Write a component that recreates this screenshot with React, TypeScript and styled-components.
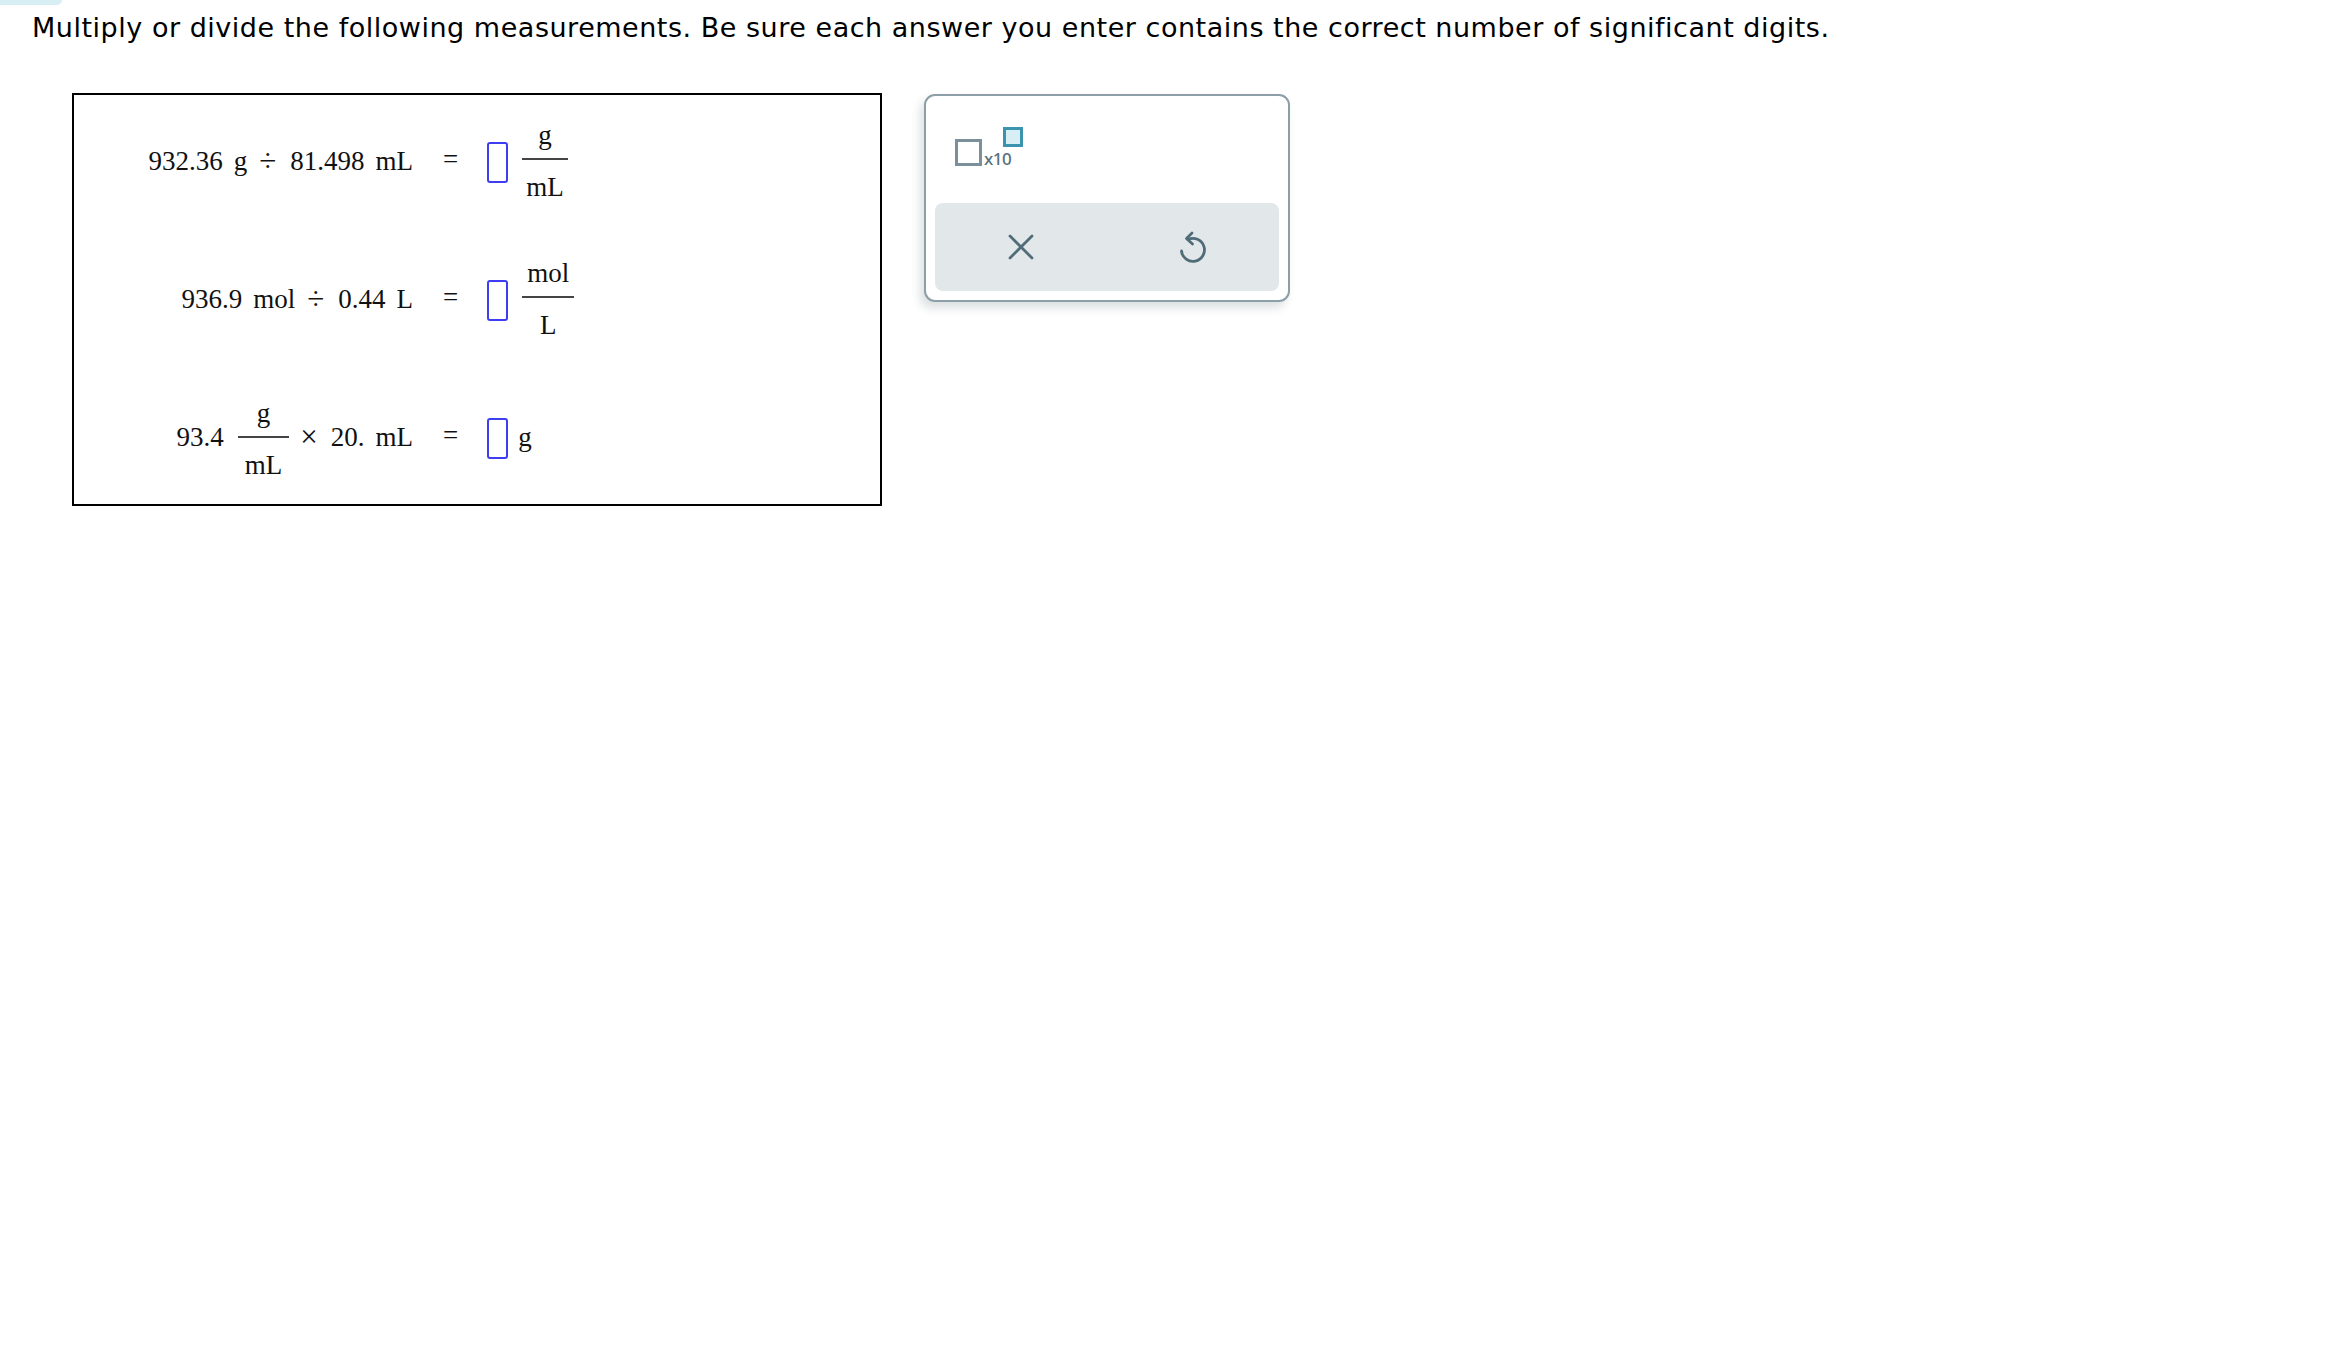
import styled, { createGlobalStyle } from "styled-components";

const GlobalStyle = createGlobalStyle`
  html, body {
    margin: 0;
    padding: 0;
    background: #ffffff;
  }
`;

const Page = styled.div`
  width: 2352px;
  min-height: 1365px;
  background: #ffffff;
`;

const Tab = styled.div`
  width: 62px;
  height: 5px;
  background: #d8eef5;
  border-bottom-right-radius: 10px;
`;

const Prompt = styled.p`
  margin: 7px 0 0 32px;
  font-family: "DejaVu Sans", Verdana, sans-serif;
  font-size: 27px;
  line-height: 32px;
  letter-spacing: 0.52px;
  color: #000;
`;

const Workspace = styled.div`
  display: flex;
  align-items: flex-start;
  gap: 42px;
  margin: 49px 0 0 72px;
`;

const ProblemBox = styled.div`
  width: 810px;
  height: 413px;
  box-sizing: border-box;
  border: 2px solid #000;
  padding-top: 19px;
  display: flex;
  flex-direction: column;
  gap: 48px;
  font-family: "Liberation Serif", "Times New Roman", serif;
  font-size: 27px;
  line-height: 30px;
  color: #111;
`;

const Row = styled.div`
  height: 90px;
  display: flex;
  align-items: center;
`;

const Expression = styled.div`
  width: 339px;
  display: flex;
  align-items: center;
  justify-content: flex-end;
  padding-top: 4px;
  white-space: nowrap;
`;

const Unit = styled.span`
  margin-left: 11px;
`;

const Op = styled.span<{ $left?: number; $right?: number }>`
  font-size: 31px;
  line-height: 30px;
  margin-left: ${(p) => p.$left ?? 12}px;
  margin-right: ${(p) => p.$right ?? 14}px;
`;

const Equals = styled.span`
  margin: 0 29px 0 30px;
`;

const AnswerSlot = styled.div`
  width: 17px;
  height: 37px;
  border: 2px solid #3d3df2;
  border-radius: 3px;
  margin-top: 6px;
`;

const Fraction = styled.span<{ $pad?: number }>`
  display: inline-flex;
  flex-direction: column;
  align-items: stretch;
  margin-left: ${(p) => p.$pad ?? 14}px;
  text-align: center;
`;

const Numerator = styled.span<{ $inset: number }>`
  padding: 4px ${(p) => p.$inset}px 8px;
`;

const Bar = styled.span`
  height: 2px;
  background: #444;
`;

const Denominator = styled.span<{ $inset: number }>`
  padding: 12px ${(p) => p.$inset}px 0;
`;

const TrailingUnit = styled.span`
  margin-left: 10px;
  margin-top: 4px;
`;

const Panel = styled.div`
  margin-top: 1px;
  width: 362px;
  height: 204px;
  border: 2px solid #8c9ea7;
  border-radius: 11px;
  background: #fff;
  box-shadow: -4px 6px 10px rgba(40, 60, 70, 0.16);
  display: flex;
  flex-direction: column;
`;

const ToolArea = styled.div`
  height: 107px;
  display: flex;
  align-items: flex-start;
  padding: 31px 0 0 29px;
  box-sizing: border-box;
`;

const BaseSquare = styled.div`
  width: 21px;
  height: 21px;
  border: 3px solid #7b9099;
  margin-top: 12px;
`;

const TenLabel = styled.span`
  font-family: "Noto Sans", sans-serif;
  font-size: 17px;
  line-height: 16px;
  font-weight: 500;
  color: #56717c;
  margin: 24px 0 0 2px;
  letter-spacing: -0.5px;
`;

const ExpSquare = styled.div`
  width: 14px;
  height: 14px;
  border: 3px solid #3b93ad;
  background: #d6eef4;
  margin-left: -8px;
`;

const ButtonBar = styled.div`
  flex: 1;
  margin: 0 9px 9px;
  background: #e2e7ea;
  border-radius: 8px;
  display: flex;
`;

const IconButton = styled.button`
  flex: 1;
  border: none;
  background: transparent;
  display: flex;
  align-items: center;
  justify-content: center;
  padding: 0;
  cursor: pointer;
  color: #4f6c78;
`;

function ClearIcon() {
  return (
    <svg width="26" height="26" viewBox="0 0 26 26" fill="none">
      <path d="M2 2 L24 24 M24 2 L2 24" stroke="currentColor" strokeWidth="2.8" strokeLinecap="round" />
    </svg>
  );
}

function UndoIcon() {
  return (
    <svg width="28" height="34" viewBox="0 0 28 34" fill="none">
      <path
        d="M9 9.5 A11.5 11.5 0 1 1 2.5 21"
        stroke="currentColor"
        strokeWidth="2.8"
        strokeLinecap="round"
      />
      <path
        d="M13 3 L7.5 8.5 L13.5 14"
        stroke="currentColor"
        strokeWidth="2.8"
        strokeLinecap="round"
        strokeLinejoin="round"
      />
    </svg>
  );
}

export default function App() {
  return (
    <Page>
      <GlobalStyle />
      <Tab />
      <Prompt>
        Multiply or divide the following measurements. Be sure each answer you enter contains the
        correct number of significant digits.
      </Prompt>
      <Workspace>
        <ProblemBox>
          <Row>
            <Expression>
              <span>932.36</span>
              <Unit>g</Unit>
              <Op>÷</Op>
              <span>81.498</span>
              <Unit>mL</Unit>
            </Expression>
            <Equals>=</Equals>
            <AnswerSlot />
            <Fraction>
              <Numerator $inset={4}>g</Numerator>
              <Bar />
              <Denominator $inset={4}>mL</Denominator>
            </Fraction>
          </Row>
          <Row>
            <Expression>
              <span>936.9</span>
              <Unit>mol</Unit>
              <Op>÷</Op>
              <span>0.44</span>
              <Unit>L</Unit>
            </Expression>
            <Equals>=</Equals>
            <AnswerSlot />
            <Fraction>
              <Numerator $inset={5}>mol</Numerator>
              <Bar />
              <Denominator $inset={5}>L</Denominator>
            </Fraction>
          </Row>
          <Row>
            <Expression>
              <span>93.4</span>
              <Fraction>
                <Numerator $inset={7}>g</Numerator>
                <Bar />
                <Denominator $inset={7}>mL</Denominator>
              </Fraction>
              <Op $left={11} $right={13}>×</Op>
              <span>20.</span>
              <Unit>mL</Unit>
            </Expression>
            <Equals>=</Equals>
            <AnswerSlot />
            <TrailingUnit>g</TrailingUnit>
          </Row>
        </ProblemBox>
        <Panel>
          <ToolArea>
            <BaseSquare />
            <TenLabel>x10</TenLabel>
            <ExpSquare />
          </ToolArea>
          <ButtonBar>
            <IconButton aria-label="Clear">
              <ClearIcon />
            </IconButton>
            <IconButton aria-label="Undo">
              <UndoIcon />
            </IconButton>
          </ButtonBar>
        </Panel>
      </Workspace>
    </Page>
  );
}
